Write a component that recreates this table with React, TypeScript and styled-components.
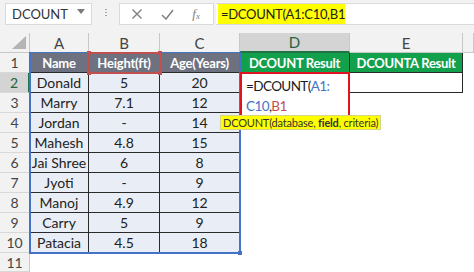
import styled, { createGlobalStyle, css } from 'styled-components';

type Kind = 'head' | 'green' | 'data' | 'box' | 'blank';

interface CellProps {
  $kind: Kind;
}

interface ActiveProps {
  $active?: boolean;
}

interface RefProps {
  $color: string;
}

const COLUMNS = ['A', 'B', 'C', 'D', 'E'];

const people = [
  ['Donald', '5', '20'],
  ['Marry', '7.1', '12'],
  ['Jordan', '-', '14'],
  ['Mahesh', '4.8', '15'],
  ['Jai Shree', '6', '8'],
  ['Jyoti', '-', '9'],
  ['Manoj', '4.9', '12'],
  ['Carry', '5', '9'],
  ['Patacia', '4.5', '18'],
];

const BLUE = '#4472c4';
const RED = '#c0504d';

const App = () => {
  const rows: { label: string; kind: Kind }[][] = [
    [
      { label: 'Name', kind: 'head' },
      { label: 'Height(ft)', kind: 'head' },
      { label: 'Age(Years)', kind: 'head' },
      { label: 'DCOUNT Result', kind: 'green' },
      { label: 'DCOUNTA Result', kind: 'green' },
      { label: '', kind: 'blank' },
    ],
    ...people.map((p, i) => [
      ...p.map((v) => ({ label: v, kind: 'data' as Kind })),
      { label: '', kind: 'blank' as Kind },
      { label: '', kind: (i === 0 ? 'box' : 'blank') as Kind },
      { label: '', kind: 'blank' as Kind },
    ]),
    Array.from({ length: 6 }, () => ({ label: '', kind: 'blank' as Kind })),
  ];

  return (
    <S.Screen>
      <GlobalStyle />
      <S.FormulaBar>
        <S.NameBox>
          DCOUNT
          <S.Caret>
            <svg width="8" height="5" viewBox="0 0 8 5">
              <path d="M0 0h8L4 5z" fill="#7a7a7a" />
            </svg>
          </S.Caret>
        </S.NameBox>
        <S.Grip>
          <span />
          <span />
          <span />
        </S.Grip>
        <S.Actions>
          <svg width="12" height="12" viewBox="0 0 12 12">
            <path d="M1.5 1.5l9 9M10.5 1.5l-9 9" stroke="#808080" strokeWidth="1.4" />
          </svg>
          <svg width="13" height="11" viewBox="0 0 13 11">
            <path d="M1 6l4 4 7-9" stroke="#808080" strokeWidth="1.5" fill="none" />
          </svg>
          <S.Fx>
            f<sub>x</sub>
          </S.Fx>
        </S.Actions>
        <S.FormulaInput>
          <S.Highlight>=DCOUNT(A1:C10,B1</S.Highlight>
        </S.FormulaInput>
      </S.FormulaBar>

      <S.Sheet>
        <S.Corner>
          <svg width="14" height="13" viewBox="0 0 14 13">
            <path d="M14 0v13H0z" fill="#b4b4b4" />
          </svg>
        </S.Corner>
        {COLUMNS.map((c) => (
          <S.ColHeader key={c} $active={c === 'D'}>
            {c}
          </S.ColHeader>
        ))}
        <S.ColHeader />

        {rows.map((row, r) => [
          <S.RowHeader key={`h${r}`} $active={r === 1}>
            {r + 1}
          </S.RowHeader>,
          ...row.map((cell, c) => (
            <S.Cell key={`${r}-${c}`} $kind={cell.kind}>
              {cell.label}
            </S.Cell>
          )),
        ])}

        <S.RangeBox>
          <S.Handle style={{ right: -3, bottom: -3 }} $color={BLUE} />
        </S.RangeBox>
        <S.RefBox $color={RED}>
          <S.Handle style={{ left: -3, top: -3 }} $color={RED} />
          <S.Handle style={{ right: -3, top: -3 }} $color={RED} />
          <S.Handle style={{ left: -3, bottom: -3 }} $color={RED} />
          <S.Handle style={{ right: -3, bottom: -3 }} $color={RED} />
        </S.RefBox>
        <S.EditBox>
          =DCOUNT(<S.Ref $color={BLUE}>A1:</S.Ref>
          <br />
          <S.Ref $color={BLUE}>C10</S.Ref>,<S.Ref $color={RED}>B1</S.Ref>
        </S.EditBox>
        <S.Tooltip>
          DCOUNT(database, <b>field</b>, criteria)
        </S.Tooltip>
      </S.Sheet>
    </S.Screen>
  );
};

const GlobalStyle = createGlobalStyle`
  body {
    margin: 0;
    background: #ffffff;
    font-family: Lato, "Open Sans", sans-serif;
  }
`;

const cellKinds = {
  head: css`
    background: #6e7280;
    color: #ffffff;
    font-weight: 700;
    font-size: 13px;
    letter-spacing: -0.2px;
    border-right: 1px solid #2a2a2a;
    border-bottom: 1px solid #2a2a2a;
  `,
  green: css`
    background: #12a04c;
    color: #ffffff;
    font-weight: 700;
    font-size: 13px;
    letter-spacing: -0.3px;
    border-right: 1px solid #2a2a2a;
    border-bottom: 1px solid #2a2a2a;
  `,
  data: css`
    background: #e9edf5;
    color: #222222;
    border-right: 1px solid #2a2a2a;
    border-bottom: 1px solid #2a2a2a;
  `,
  box: css`
    background: #ffffff;
    border-right: 1px solid #2a2a2a;
    border-bottom: 1px solid #2a2a2a;
  `,
  blank: css`
    background: #ffffff;
  `,
};

const S = {
  Screen: styled.div`
    width: 474px;
    height: 272px;
    overflow: hidden;
    background: #ffffff;
  `,

  FormulaBar: styled.div`
    display: flex;
    align-items: flex-start;
    height: 33px;
    padding-top: 3px;
    box-sizing: border-box;
    background: #f2f2f2;
  `,

  NameBox: styled.div`
    display: flex;
    align-items: center;
    justify-content: space-between;
    width: 87px;
    height: 22px;
    margin-left: 5px;
    padding: 0 6px 0 6px;
    box-sizing: border-box;
    background: #ffffff;
    border: 1px solid #dadada;
    font-size: 13px;
    color: #333333;
  `,

  Caret: styled.span`
    display: flex;
    margin-top: -6px;
  `,

  Grip: styled.div`
    display: flex;
    flex-direction: column;
    gap: 2px;
    width: 2px;
    margin: 6px 12px 0 13px;

    span {
      width: 2px;
      height: 1px;
      background: #a8a8a8;
    }
  `,

  Actions: styled.div`
    display: flex;
    align-items: center;
    justify-content: space-around;
    width: 95px;
    height: 22px;
    padding: 0 4px 0 2px;
    box-sizing: border-box;
    background: #ffffff;
    border: 1px solid #dadada;
  `,

  Fx: styled.span`
    font-family: 'Liberation Serif', serif;
    font-style: italic;
    font-size: 13px;
    color: #808080;

    sub {
      font-size: 9px;
      vertical-align: -1px;
    }
  `,

  FormulaInput: styled.div`
    flex: 1;
    display: flex;
    align-items: stretch;
    height: 22px;
    margin-left: 2px;
    padding-left: 2px;
    background: #ffffff;
    border-top: 1px solid #dadada;
    border-bottom: 1px solid #dadada;
    box-sizing: border-box;
  `,

  Highlight: styled.span`
    display: flex;
    align-items: center;
    width: 127px;
    padding-left: 3px;
    box-sizing: border-box;
    background: #ffff00;
    font-size: 13px;
    letter-spacing: -0.3px;
    color: #222222;
    white-space: nowrap;
  `,

  Sheet: styled.div`
    position: relative;
    display: grid;
    grid-template-columns: 30px 59px 71px 80px 110px 113px 11px;
    grid-template-rows: 20px repeat(10, 20px) 19px;
    font-size: 14px;
  `,

  Corner: styled.div`
    display: flex;
    align-items: flex-end;
    justify-content: flex-end;
    padding: 0 3px 3px 0;
    background: #f2f2f2;
    border-right: 1px solid #c8c8c8;
    border-bottom: 1px solid #c8c8c8;
  `,

  ColHeader: styled.div<ActiveProps>`
    display: flex;
    align-items: center;
    justify-content: center;
    box-sizing: border-box;
    font-size: 15px;
    ${({ $active }) => css`
      background: ${$active ? '#d4d4d4' : '#f2f2f2'};
      color: ${$active ? '#25633f' : '#444444'};
      border-right: 1px solid #c8c8c8;
      border-bottom: ${$active ? '2px solid #217346' : '1px solid #c8c8c8'};
    `};
  `,

  RowHeader: styled.div<ActiveProps>`
    display: flex;
    align-items: center;
    justify-content: center;
    box-sizing: border-box;
    ${({ $active }) => css`
      background: ${$active ? '#d4d4d4' : '#f2f2f2'};
      color: ${$active ? '#25633f' : '#444444'};
      border-right: ${$active ? '2px solid #217346' : '1px solid #c8c8c8'};
      border-bottom: 1px solid #d8d8d8;
    `};
  `,

  Cell: styled.div<CellProps>`
    display: flex;
    align-items: center;
    justify-content: center;
    box-sizing: border-box;
    white-space: nowrap;
    overflow: hidden;
    ${({ $kind }) => cellKinds[$kind]};
  `,

  RangeBox: styled.div`
    position: absolute;
    left: 29px;
    top: 19px;
    width: 212px;
    height: 202px;
    box-sizing: border-box;
    border: 2px solid ${BLUE};
    border-top-width: 1px;
  `,

  RefBox: styled.div<RefProps>`
    position: absolute;
    left: 88px;
    top: 19px;
    width: 73px;
    height: 22px;
    box-sizing: border-box;
    border: 2px solid ${({ $color }) => $color};
  `,

  Handle: styled.span<RefProps>`
    position: absolute;
    width: 4px;
    height: 4px;
    background: ${({ $color }) => $color};
  `,

  EditBox: styled.div`
    position: absolute;
    left: 240px;
    top: 39px;
    width: 110px;
    height: 51px;
    padding: 2px 4px;
    box-sizing: border-box;
    background: #ffffff;
    border: 2px solid #e0141e;
    font-size: 13.5px;
    letter-spacing: -0.6px;
    line-height: 20px;
    color: #1a1a1a;
  `,

  Ref: styled.span<RefProps>`
    color: ${({ $color }) => $color};
  `,

  Tooltip: styled.div`
    position: absolute;
    left: 220px;
    top: 82px;
    padding: 0 2px;
    background: #ffff00;
    border: 1px solid #d6d68a;
    font-size: 11px;
    letter-spacing: -0.2px;
    line-height: 13px;
    color: #333333;
    white-space: nowrap;

    b {
      font-weight: 700;
    }
  `,
};

export default App;
